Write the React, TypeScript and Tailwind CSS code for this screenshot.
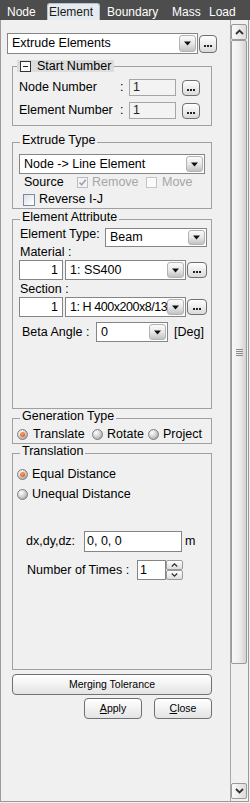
import React from "react";

const Tri = () => (
  <svg width="7" height="5" viewBox="0 0 7 5">
    <path d="M0 0.5H7L3.5 4.6Z" fill="#111" />
  </svg>
);

function ArrowBtn() {
  return (
    <div className="w-[17px] shrink-0 rounded-[3px] border border-[#b3b3b3] bg-gradient-to-b from-[#fbfbfb] via-[#e8e8e8] to-[#c2c2c2] flex items-center justify-center">
      <Tri />
    </div>
  );
}

function Select({ text, className = "", textClass = "" }: { text: string; className?: string; textClass?: string }) {
  return (
    <div className={`flex shrink-0 border border-[#858585] bg-white p-[1px] ${className}`}>
      <div className={`flex-1 min-w-0 overflow-hidden whitespace-nowrap pl-[3px] flex items-center ${textClass}`}>{text}</div>
      <ArrowBtn />
    </div>
  );
}

function Dots({ className = "" }: { className?: string }) {
  return (
    <div
      className={`shrink-0 rounded-[4px] border border-[#707070] bg-gradient-to-b from-white to-[#dadada] flex items-center justify-center ${className}`}
    >
      <svg width="8" height="2" viewBox="0 0 8 2" className="mt-[4px]">
        <rect x="0" y="0" width="2" height="2" fill="#222" />
        <rect x="3" y="0" width="2" height="2" fill="#222" />
        <rect x="6" y="0" width="2" height="2" fill="#222" />
      </svg>
    </div>
  );
}

function Legend({ children }: { children: React.ReactNode }) {
  return <legend className="ml-[7px] px-[2px] leading-[13px] pb-[3px]">{children}</legend>;
}

function Radio({ checked }: { checked?: boolean }) {
  return (
    <div className="w-[11px] h-[11px] shrink-0 rounded-full border border-[#7e7e7e] bg-[radial-gradient(circle_at_35%_30%,#ffffff_0%,#cfcfcf_50%,#8c8c8c_100%)] flex items-center justify-center">
      {checked && (
        <div className="w-[5px] h-[5px] rounded-full bg-[radial-gradient(circle_at_40%_35%,#ffa36a,#e0400a)]" />
      )}
    </div>
  );
}

function CheckMark({ color }: { color: string }) {
  return (
    <svg width="9" height="9" viewBox="0 0 9 9">
      <path d="M1.5 4.5L3.7 6.8L7.7 1.8" stroke={color} strokeWidth="1.6" fill="none" />
    </svg>
  );
}

function Btn({ children, className = "" }: { children: React.ReactNode; className?: string }) {
  return (
    <div
      className={`shrink-0 rounded-[4px] border border-[#707070] bg-gradient-to-b from-white to-[#e4e4e4] flex items-center justify-center text-[10.5px] text-black ${className}`}
    >
      {children}
    </div>
  );
}

function Chevron({ up }: { up?: boolean }) {
  return (
    <svg width="9" height="6" viewBox="0 0 9 6">
      <path d={up ? "M1 5L4.5 1.5L8 5" : "M1 1L4.5 4.5L8 1"} stroke="#333" strokeWidth="1.8" fill="none" />
    </svg>
  );
}

function Scrollbar() {
  return (
    <div className="w-[18px] shrink-0 border-l border-[#a8a8a8] flex flex-col pt-[4px] pb-[2px]">
      <div className="w-[16px] h-[16px] rounded-[2px] border border-[#9a9a9a] bg-gradient-to-r from-[#fbfbfb] to-[#dcdcdc] flex items-center justify-center">
        <Chevron up />
      </div>
      <div className="w-[16px] h-[624px] rounded-[2px] border border-[#9a9a9a] bg-gradient-to-r from-[#f8f8f8] via-[#efefef] to-[#d2d2d2] flex items-center justify-center">
        <div className="flex flex-col gap-[1px] w-[7px]">
          <div className="h-[1px] bg-[#8a8a8a]" />
          <div className="h-[1px] bg-[#8a8a8a]" />
          <div className="h-[1px] bg-[#8a8a8a]" />
          <div className="h-[1px] bg-[#8a8a8a]" />
        </div>
      </div>
      <div className="flex-1" />
      <div className="w-[16px] h-[16px] rounded-[2px] border border-[#9a9a9a] bg-gradient-to-r from-[#fbfbfb] to-[#dcdcdc] flex items-center justify-center">
        <Chevron />
      </div>
    </div>
  );
}

export default function App() {
  return (
    <div className="w-[250px] h-[803px] bg-[#f0f0f0] text-[12.5px] text-black font-['Liberation_Sans',Arial,sans-serif] flex flex-col overflow-hidden">
      {/* Tab bar */}
      <div className="h-[20px] shrink-0 bg-[#4d4d4d] flex text-[12px] leading-[14px] text-white">
        <div className="w-[47px] pt-[5px] pl-[7px]">Node</div>
        <div className="mt-[3px] w-[53px] h-[17px] rounded-t-[3px] border border-b-0 border-[#a9c6d8] bg-[#e6ebef] text-[#1a1a1a] pt-[1px] pl-[1px]">
          Element
        </div>
        <div className="w-[66px] pt-[5px] pl-[7px]">Boundary</div>
        <div className="w-[37px] pt-[5px] pl-[6px]">Mass</div>
        <div className="pt-[5px] pl-[6px]">Load</div>
      </div>

      {/* Panel */}
      <div className="w-[249px] h-[782px] shrink-0 flex border-l border-r border-b border-[#9a9a9a]">
        <div className="w-[229px] shrink-0 flex flex-col">
          {/* Top select */}
          <div className="mt-[13px] ml-[6px] flex items-center h-[21px]">
            <Select text="Extrude Elements" className="w-[191px] h-[21px]" />
            <Dots className="ml-[1px] w-[18px] h-[18px]" />
          </div>

          {/* Start Number */}
          <fieldset className="mt-[6px] ml-[11px] w-[200px] border border-[#a0a0a0] pb-[6px]">
            <legend className="ml-[4px] h-[12px] bg-[#dcdcdc] px-[3px] leading-[12px]">
              <div className="flex items-center h-[12px]">
                <svg width="11" height="11" viewBox="0 0 11 11">
                  <rect x="0.5" y="0.5" width="10" height="10" fill="#fafafa" stroke="#333" />
                  <path d="M3 5.5H8" stroke="#222" strokeWidth="1" />
                </svg>
                <span className="ml-[6px]">Start Number</span>
              </div>
            </legend>
            <div className="mt-[7px] ml-[6px] flex items-center h-[17px]">
              <span className="w-[101px]">Node Number</span>
              <span className="w-[9px]">:</span>
              <div className="w-[47px] h-[17px] border border-[#a6a6a6] bg-[#f3f3f3] pl-[3px] flex items-center text-[#222]">1</div>
              <Dots className="ml-[6px] w-[18px] h-[16px]" />
            </div>
            <div className="mt-[6px] ml-[6px] flex items-center h-[17px]">
              <span className="w-[101px]">Element Number</span>
              <span className="w-[9px]">:</span>
              <div className="w-[47px] h-[17px] border border-[#a6a6a6] bg-[#f3f3f3] pl-[3px] flex items-center text-[#222]">1</div>
              <Dots className="ml-[6px] w-[18px] h-[16px]" />
            </div>
          </fieldset>

          {/* Extrude Type */}
          <fieldset className="mt-[8px] ml-[11px] w-[200px] border border-[#a0a0a0] pb-[2px]">
            <Legend>Extrude Type</Legend>
            <Select text="Node -> Line Element" className="mt-[4px] ml-[6px] w-[186px] h-[20px]" />
            <div className="mt-[2px] ml-[11px] h-[12px] flex items-center">
              <span className="w-[53px]">Source</span>
              <div className="w-[69px] flex items-center">
                <div className="w-[11px] h-[11px] border border-[#b5bec8] bg-[#f4f4f4] flex items-center justify-center">
                  <CheckMark color="#a2a2a2" />
                </div>
                <span className="ml-[4px] text-[#a6a6a6]">Remove</span>
              </div>
              <div className="flex items-center">
                <div className="w-[11px] h-[11px] border border-[#c4c4c4] bg-[#fbfbfb]" />
                <span className="ml-[5px] text-[#a6a6a6]">Move</span>
              </div>
            </div>
            <div className="mt-[5px] ml-[10px] h-[13px] flex items-center">
              <div className="w-[12px] h-[12px] border border-[#7d8a99] bg-gradient-to-br from-[#dce2e9] to-white" />
              <span className="ml-[4px]">Reverse I-J</span>
            </div>
          </fieldset>

          {/* Element Attribute */}
          <fieldset className="mt-[2px] ml-[11px] w-[200px] border border-[#a0a0a0] pb-[66px]">
            <Legend>Element Attribute</Legend>
            <div className="mt-[1px] ml-[7px] flex items-start">
              <span className="w-[85px] leading-[11px] mt-[1px]">Element Type:</span>
              <Select text="Beam" className="w-[102px] h-[19px]" />
            </div>
            <div className="ml-[7px] h-[11px] leading-[11px]">Material :</div>
            <div className="mt-[2px] ml-[6px] flex items-center h-[20px]">
              <div className="w-[44px] h-[20px] border border-[#858585] bg-white flex items-center justify-end pr-[4px]">1</div>
              <Select text="1: SS400" className="ml-[2px] w-[121px] h-[20px]" />
              <Dots className="ml-[1px] w-[20px] h-[16px]" />
            </div>
            <div className="mt-[4px] ml-[7px] h-[11px] leading-[11px]">Section :</div>
            <div className="mt-[2px] ml-[6px] flex items-center h-[20px]">
              <div className="w-[44px] h-[20px] border border-[#858585] bg-white flex items-center justify-end pr-[4px]">1</div>
              <Select
                text="1: H 400x200x8/13"
                className="ml-[2px] w-[121px] h-[20px]"
                textClass="tracking-[-0.45px]"
              />
              <Dots className="ml-[1px] w-[20px] h-[16px]" />
            </div>
            <div className="mt-[5px] ml-[9px] flex items-center h-[20px]">
              <span className="w-[74px]">Beta Angle :</span>
              <Select text="0" className="w-[72px] h-[20px]" />
              <span className="ml-[6px]">[Deg]</span>
            </div>
          </fieldset>

          {/* Generation Type */}
          <fieldset className="mt-[1px] ml-[11px] w-[200px] border border-[#a0a0a0] pb-[3px]">
            <Legend>Generation Type</Legend>
            <div className="mt-[2px] ml-[4px] h-[12px] flex items-center">
              <div className="w-[75px] flex items-center">
                <Radio checked />
                <span className="ml-[5px]">Translate</span>
              </div>
              <div className="w-[56px] flex items-center">
                <Radio />
                <span className="ml-[4px]">Rotate</span>
              </div>
              <div className="flex items-center">
                <Radio />
                <span className="ml-[4px]">Project</span>
              </div>
            </div>
          </fieldset>

          {/* Translation */}
          <fieldset className="mt-[1px] ml-[11px] w-[200px] border border-[#a0a0a0] pb-[89px]">
            <Legend>Translation</Legend>
            <div className="mt-[7px] ml-[4px] h-[12px] flex items-center">
              <Radio checked />
              <span className="ml-[4px]">Equal Distance</span>
            </div>
            <div className="mt-[8px] ml-[4px] h-[12px] flex items-center">
              <Radio />
              <span className="ml-[4px]">Unequal Distance</span>
            </div>
            <div className="mt-[31px] ml-[13px] h-[21px] flex items-center">
              <span className="w-[58px]">dx,dy,dz:</span>
              <div className="w-[98px] h-[21px] border border-[#858585] bg-white flex items-center pl-[2px]">0, 0, 0</div>
              <span className="ml-[3px]">m</span>
            </div>
            <div className="mt-[8px] ml-[14px] h-[20px] flex items-center">
              <span className="w-[110px]">Number of Times :</span>
              <div className="w-[29px] h-[20px] border border-[#858585] bg-white flex items-center pl-[2px]">1</div>
              <div className="w-[17px] h-[20px] flex flex-col">
                <div className="h-[10px] rounded-[2px] border border-[#9a9a9a] bg-gradient-to-b from-white to-[#dcdcdc] flex items-center justify-center">
                  <svg width="7" height="4" viewBox="0 0 7 4">
                    <path d="M0.8 3.5L3.5 0.9L6.2 3.5" stroke="#333" strokeWidth="1.3" fill="none" />
                  </svg>
                </div>
                <div className="h-[10px] rounded-[2px] border border-[#9a9a9a] bg-gradient-to-b from-white to-[#dcdcdc] flex items-center justify-center">
                  <svg width="7" height="4" viewBox="0 0 7 4">
                    <path d="M0.8 0.5L3.5 3.1L6.2 0.5" stroke="#333" strokeWidth="1.3" fill="none" />
                  </svg>
                </div>
              </div>
            </div>
          </fieldset>

          <Btn className="mt-[4px] ml-[11px] w-[200px] h-[21px]">Merging Tolerance</Btn>
          <div className="mt-[3px] ml-[83px] flex gap-[12px]">
            <Btn className="w-[58px] h-[21px]">
              <span>
                <span className="underline">A</span>pply
              </span>
            </Btn>
            <Btn className="w-[58px] h-[21px]">
              <span>
                <span className="underline">C</span>lose
              </span>
            </Btn>
          </div>
        </div>
        <Scrollbar />
      </div>
    </div>
  );
}
